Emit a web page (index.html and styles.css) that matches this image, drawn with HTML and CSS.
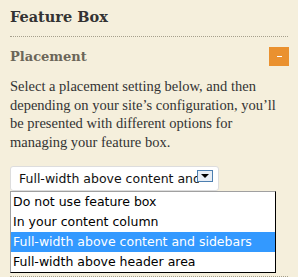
FILE: index.html
```html
<!DOCTYPE html>
<html lang="en">
<head>
    <meta charset="UTF-8">
    <title>Feature Box</title>
    <link rel="stylesheet" href="styles.css">
</head>
<body>
    <div class="panel">
        <h3 class="panel-title">Feature Box</h3>

        <div class="section">
            <div class="section-head">
                <h4>Placement</h4>
                <span class="toggle"><span class="minus"></span></span>
            </div>
            <p class="desc">Select a placement setting below, and then depending on your site’s configuration, you’ll be presented with different options for managing your feature box.</p>

            <div class="select-wrap">
                <div class="select">
                    <span class="select-value">Full-width above content and sidebars</span>
                    <span class="select-arrow"></span>
                </div>
                <!-- open dropdown list -->
                <ul class="options">
                    <li>Do not use feature box</li>
                    <li>In your content column</li>
                    <li class="selected">Full-width above content and sidebars</li>
                    <li>Full-width above header area</li>
                </ul>
            </div>
        </div>
    </div>
</body>
</html>
```

FILE: styles.css
```css
body {
    margin: 0;
    background-color: #f5efdc;
    font-family: "Liberation Serif", serif;
}
.panel {
    padding: 0 10px;
}
.panel-title {
    margin: 0;
    padding: 8px 0 11px;
    font-family: "DejaVu Serif", serif;
    font-size: 14.5px;
    color: #333;
    border-bottom: 1px dotted #a59f8c;
}
.section {
    border-bottom: 1px dotted #a59f8c;
    padding-bottom: 85px;
}
.section-head {
    display: flex;
    justify-content: space-between;
    align-items: center;
    padding-top: 10px;
    margin-right: -1px;
}
.section-head h4 {
    margin: 0;
    font-family: "DejaVu Serif", serif;
    font-size: 13px;
    color: #6b6659;
}
.toggle {
    width: 20px;
    height: 19px;
    background-color: #ea912f;
    display: flex;
    justify-content: center;
    align-items: center;
}
.minus {
    width: 5px;
    height: 1px;
    background-color: #fff;
}
.desc {
    margin: 11px 0 0;
    font-size: 14.5px;
    line-height: 18.5px;
    color: #333;
}
.select-wrap {
    position: relative;
    margin-top: 15px;
}
.select {
    width: 209px;
    height: 25px;
    border: 1px solid #ddd;
    border-radius: 3px;
    background-color: #fff;
    display: flex;
    align-items: center;
    padding-left: 8px;
    box-sizing: border-box;
    position: relative;
    font-family: "DejaVu Sans", sans-serif;
    font-size: 12.5px;
    color: #111;
}
.select-value {
    white-space: nowrap;
    overflow: hidden;
    width: 180px;
}
.select-arrow {
    position: absolute;
    right: 5px;
    top: 3px;
    width: 14px;
    height: 10px;
    border: 1px solid #4d7fb0;
    background-color: #e8eef6;
}
.select-arrow::after {
    content: "";
    position: absolute;
    left: 3px;
    top: 3px;
    border-left: 4px solid transparent;
    border-right: 4px solid transparent;
    border-top: 4px solid #000;
}
.options {
    position: absolute;
    left: 0;
    top: 25px;
    width: 266px;
    margin: 0;
    padding: 0;
    list-style: none;
    background-color: #fff;
    border-top: 1px solid #a0a0a0;
    border-left: 1px solid #a0a0a0;
    border-right: 1px solid #000;
    border-bottom: 1px solid #000;
    box-sizing: border-box;
    font-family: "DejaVu Sans", sans-serif;
    font-size: 12.5px;
    color: #000;
}
.options li {
    height: 20px;
    line-height: 20px;
    padding-left: 2px;
    white-space: nowrap;
}
.options li.selected {
    background-color: #3399ff;
    color: #fff;
}
```
